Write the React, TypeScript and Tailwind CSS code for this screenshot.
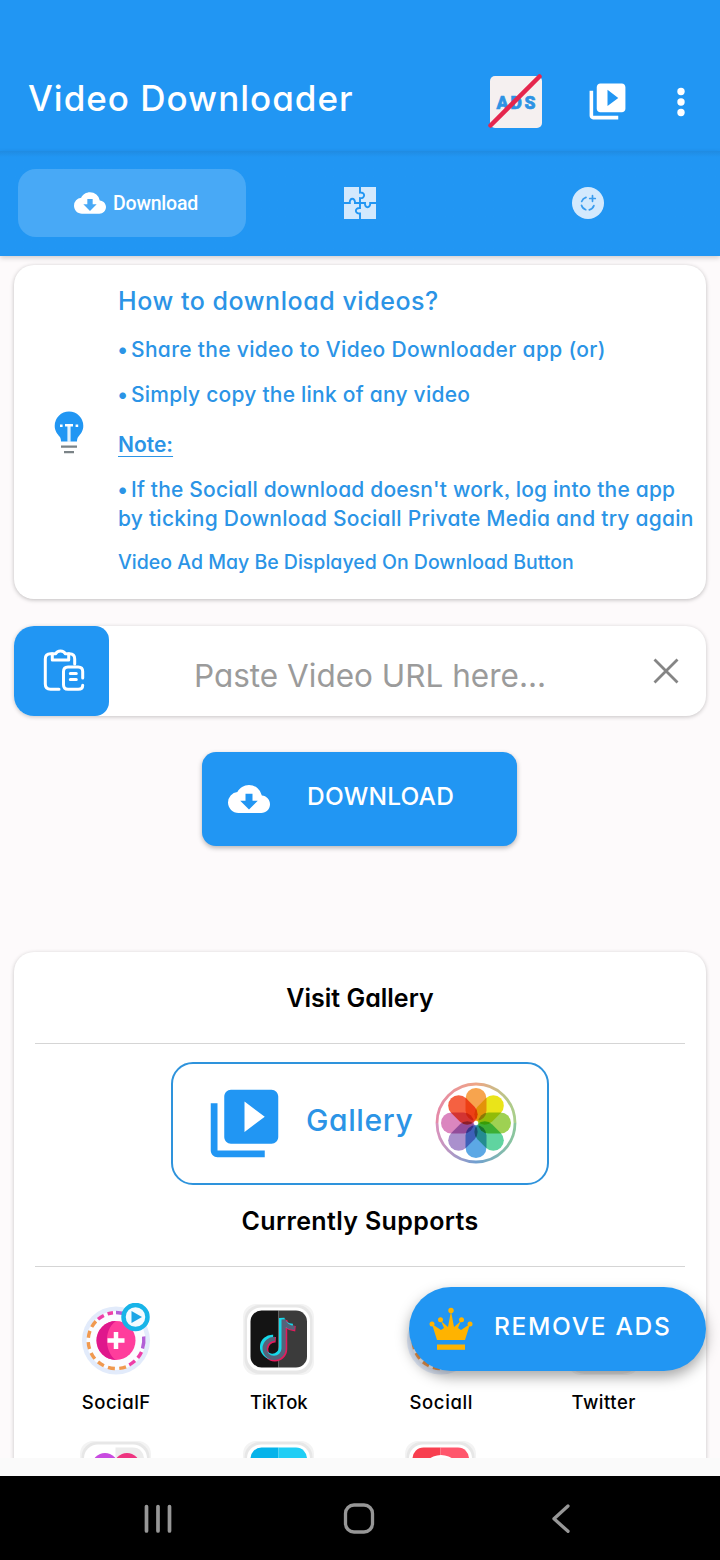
import type { ReactNode } from "react";
import { MdCloudDownload, MdVideoLibrary } from "react-icons/md";

function NoAdsIcon() {
  return (
    <svg width="56" height="56" viewBox="0 0 56 56">
      <rect x="2" y="2" width="52" height="52" rx="5" fill="#f5f0f0" />
      <text x="8.500 22.500 36.500" y="34.500" fontSize="17.500" fontWeight="900" fill="#2e93e4" stroke="#2e93e4" strokeWidth=".6" fontFamily="Roboto, sans-serif">
        ADS
      </text>
      <path d="M2.500 51.500 51.500 2.500" stroke="#e5264d" strokeWidth="4.500" strokeLinecap="round" />
    </svg>
  );
}

function PuzzleIcon() {
  return (
    <svg width="32" height="32" viewBox="0 0 32 32" fill="none">
      <path fill="#d3e9fd" d="M0 0h32v32H0z" />
      <g stroke="#2196f3" strokeWidth="1.900">
        <path d="M16 0v5.600c5.500-.5 5.500 6 0 5.500V21c-5.500-.5-5.500 6 0 5.500V32" />
        <path d="M0 16h5.800c-.6-5.600 5.600-5.600 5.200 0H21c-.6 5.600 5.600 5.600 5.200 0H32" />
      </g>
    </svg>
  );
}

function StatusIcon() {
  return (
    <svg width="32" height="32" viewBox="0 0 32 32" fill="none">
      <circle cx="16" cy="16" r="16" fill="#d3e9fd" />
      <g stroke="#3a9cee" strokeWidth="1.700" strokeLinecap="round">
        <path d="M14 10.400a6.500 6.500 0 0 0-4.300 4.100M9.500 18.300a6.500 6.500 0 0 0 4.300 4.400M17.300 22.800a6.500 6.500 0 0 0 4.600-4.200" />
        <path d="M20.500 8.700v5.600M17.700 11.500h5.600" />
      </g>
    </svg>
  );
}

function BulbIcon() {
  return (
    <svg width="30" height="44" viewBox="0 0 30 44" fill="none">
      <path d="M15 .5a14.300 14.300 0 0 0-14.300 14.300c0 5.500 2.700 8 5 11 1 1.500 1.300 2.800 1.300 4.700h16c0-1.900.3-3.200 1.300-4.700 2.300-3 5-5.500 5-11A14.300 14.300 0 0 0 15 .5z" fill="#2196f3" />
      <path d="M15 14v17" stroke="#dff0fd" strokeWidth="3.200" />
      <path d="M11 14.200h8M6 14.700h2.600M21.600 14.700h2.600" stroke="#fff" strokeWidth="2.600" />
      <path d="M7 35.700h16M10 41.200h10" stroke="#7b8387" strokeWidth="2.200" />
    </svg>
  );
}

function PasteIcon() {
  return (
    <svg width="44" height="46" viewBox="42 649 44 46" fill="none" stroke="#fff" strokeWidth="3" strokeLinecap="round" strokeLinejoin="round">
      <path d="M59 690.300h-8.500q-5.200 0-5.200-5.200v-25.200q0-5.200 5.200-5.200H52M69 654.700h.5q5.200 0 5.200 5.200V665" />
      <path d="M52.300 654.700v6.300h16.400v-6.300h-3.500a5 4.200 0 0 0-9.400 0z" />
      <path d="M82.700 679v-6.500q0-4.500-4.500-4.500H68q-4.500 0-4.500 4.500v13.300q0 4.500 4.500 4.500h10.200q4.500 0 4.500-4" />
      <path d="M70.300 674.500h6M70.300 680.500h6" />
    </svg>
  );
}

const petals = ["#f79a3a", "#e8e100", "#93cc3f", "#4fd096", "#4a9fe2", "#a184c8", "#d779b8", "#f4502c"];

function GalleryFlower() {
  return (
    <svg width="82" height="82" viewBox="-41 -41 82 82" className="isolate">
      <defs>
        <linearGradient id="ringTop" x1="0" x2="1">
          <stop offset="0" stopColor="#e58aa8" />
          <stop offset=".5" stopColor="#efa585" />
          <stop offset="1" stopColor="#a9cf8b" />
        </linearGradient>
        <linearGradient id="ringBottom" x1="0" x2="1">
          <stop offset="0" stopColor="#d893bd" />
          <stop offset=".5" stopColor="#6f9fd0" />
          <stop offset="1" stopColor="#8cc79c" />
        </linearGradient>
      </defs>
      <path d="M-39 0a39 39 0 0 1 78 0" fill="none" stroke="url(#ringTop)" strokeWidth="2.800" />
      <path d="M-39 0a39 39 0 0 0 78 0" fill="none" stroke="url(#ringBottom)" strokeWidth="2.800" />
      {petals.map((color, i) => (
        <rect key={color} x="-10.500" y="-35" width="21" height="33" rx="10.500" fill={color} opacity=".9" className="mix-blend-multiply" transform={`rotate(${i * 45})`} />
      ))}
      <circle r="2" fill="#fff" />
    </svg>
  );
}

function StoryIcon({ badge }: { badge?: boolean }) {
  return (
    <svg width="72" height="72" viewBox="0 0 72 72" fill="none">
      <circle cx="36" cy="37.500" r="34" fill="#e2ebfb" />
      <circle cx="36" cy="37.500" r="29.500" fill="#fbfcff" />
      <g strokeWidth="3.400" strokeLinecap="butt">
        <path d="M46 63.800a28 28 0 0 1-28-47.500" stroke="#f0994f" strokeDasharray="7 4.300" />
        <path d="M18 16.300A28 28 0 0 1 33 9.800" stroke="#ee3ea8" strokeDasharray="7 4" />
        <path d="M36 9.500a28 28 0 0 1 26 17.700M63.700 33.500a28 28 0 0 1-1.200 12" stroke="#b25fd6" strokeDasharray="13 5" />
        <path d="M61.500 49A28 28 0 0 1 48 62.500" stroke="#ee3ea8" strokeDasharray="7 4" />
      </g>
      <circle cx="36" cy="37.500" r="19.500" fill="#ff3d9c" />
      <path d="M36 18a19.500 19.500 0 0 0 0 39c-10-6-14-29 0-39z" fill="#df178c" />
      <path d="M36 29v17M27.500 37.500h17" stroke="#fff" strokeWidth="4.500" />
      {badge && (
        <>
          <circle cx="55.500" cy="14" r="12" fill="#f4fbff" stroke="#18b4e8" strokeWidth="4.500" />
          <path d="M51.500 8 62 14 51.500 20z" fill="#1ba5e6" />
        </>
      )}
    </svg>
  );
}

function AppTile({ left, right, children }: { left: string; right: string; children?: ReactNode }) {
  return (
    <svg width="72" height="72" viewBox="0 0 72 72">
      <rect x="0" y="1" width="71" height="71" rx="13" fill="#f3f3f3" />
      <rect x="1.500" y="2" width="68" height="69" rx="15" fill="#e7e7e7" />
      <rect x="4" y="4.500" width="63" height="63" rx="14" fill="#fff" />
      <path d="M35.500 7.500h-17A11 11 0 0 0 7.500 18.500v35A11 11 0 0 0 18.500 64.500h17z" fill={left} />
      <path d="M35.500 7.500H53a11 11 0 0 1 11 11v35a11 11 0 0 1-11 11H35.500z" fill={right} />
      {children}
    </svg>
  );
}

const NOTE = "M31.500 35.500a9.500 9.500 0 1 0 8.700 9.500V16q1 7.500 11 8.500";

function TikTokTile() {
  return (
    <AppTile left="#141414" right="#3b3b3b">
      <g fill="none">
        <path d={NOTE} stroke="#e31b5d" strokeWidth="5.500" transform="translate(1.300 1.300)" />
        <path d={NOTE} stroke="#17d9ea" strokeWidth="5.500" transform="translate(-1.500 -1)" />
        <path d={NOTE} stroke="#56637a" strokeWidth="4.200" transform="translate(.4 .5)" />
      </g>
    </AppTile>
  );
}

function HeartsTile() {
  return (
    <AppTile left="#ffffff" right="#ececec">
      <circle cx="25" cy="26" r="13" fill="#c84be0" />
      <circle cx="47" cy="26" r="13" fill="#ee3480" />
    </AppTile>
  );
}

function RingTile() {
  return (
    <AppTile left="#f83f4f" right="#ff566c">
      <circle cx="36" cy="35" r="20" fill="#fff" />
    </AppTile>
  );
}

function CrownIcon() {
  return (
    <svg width="44" height="44" viewBox="0 0 44 44" fill="#ffb300">
      <path d="M8 33 3 17l9 6 3-2-3-7 7 6 3-16 3 16 7-6-3 7 3 2 9-6-5 16z" />
      <circle cx="3" cy="17" r="2.500" />
      <circle cx="11.500" cy="12.800" r="2.500" />
      <circle cx="22" cy="3.500" r="2.700" />
      <circle cx="32.500" cy="12.800" r="2.500" />
      <circle cx="41" cy="17" r="2.500" />
      <path d="M8 37.500h28v5.300H8z" />
    </svg>
  );
}

function Bullet() {
  return <span className="inline-block w-[13px] tracking-normal [font-feature-settings:normal]"><span className="-ml-px">•</span></span>;
}

function SupportedApp({ name, tracking, children }: { name: string; tracking: string; children: ReactNode }) {
  return (
    <div className="flex h-[137px] flex-col items-center">
      {children}
      <div className={`mt-[13px] text-[18.500px] font-medium leading-7 text-black ${tracking}`}>{name}</div>
    </div>
  );
}

export default function App() {
  return (
    <div className="relative flex h-[1560px] w-[720px] flex-col overflow-hidden bg-[#fafafa] font-['Inter',sans-serif] [font-feature-settings:'cv11','ss03']">
      <header className="flex h-[151px] shrink-0 items-start bg-[#2196f3] pl-7 pt-[73px]">
        <h1 className="w-[460px] whitespace-nowrap text-[35px] font-medium leading-[50px] tracking-[1px] text-white">Video Downloader</h1>
        <div className="mt-px">
          <NoAdsIcon />
        </div>
        <MdVideoLibrary size={43} color="#fff" className="ml-[42px] mt-[7px]" />
        <svg width="10" height="32" viewBox="0 0 10 32" fill="#fff" className="ml-[47px] mt-[13px]">
          <circle cx="5" cy="5.500" r="3.700" />
          <circle cx="5" cy="16" r="3.700" />
          <circle cx="5" cy="26.500" r="3.700" />
        </svg>
      </header>

      <nav className="z-10 flex h-[105px] shrink-0 items-center bg-[#2196f3] bg-linear-to-b from-[#208be1] to-[#2196f3] to-[6px] px-[18px] pb-0.5 shadow-[0_2px_5px_rgba(0,0,0,0.18)]">
        <div className="flex h-[68px] w-[228px] items-center rounded-[18px] bg-[#48a9f6] pl-14">
          <MdCloudDownload size={32} color="#fff" />
          <span className="ml-[7px] mt-0.5 font-['Roboto',sans-serif] text-[19.500px] font-medium leading-6 tracking-[-0.200px] text-white">Download</span>
        </div>
        <div className="flex flex-1 justify-center">
          <PuzzleIcon />
        </div>
        <div className="flex flex-1 justify-center">
          <StatusIcon />
        </div>
      </nav>

      <main className="h-[1202px] shrink-0 overflow-hidden bg-[#fdfafb] px-3.5 pt-[9px]">
        <section className="flex h-[334px] rounded-[20px] bg-white text-[#2b94e6] shadow-[0_1px_4px_rgba(0,0,0,0.25)]">
          <div className="w-[104px] shrink-0 pl-10 pt-[146px]">
            <BulbIcon />
          </div>
          <div className="whitespace-nowrap pt-[21px] text-[21px] font-medium leading-[29px]">
            <h2 className="text-[25px] leading-[30px] tracking-[0.550px]">How to download videos?</h2>
            <p className="mt-[19px] tracking-[0.320px]"><Bullet />Share the video to Video Downloader app (or)</p>
            <p className="mt-4 tracking-[0.230px]"><Bullet />Simply copy the link of any video</p>
            <p className="mt-[21px] font-semibold tracking-[0px] underline decoration-1 underline-offset-4">Note:</p>
            <p className="mt-4 tracking-[0.190px]"><Bullet />If the Sociall download doesn't work, log into the app</p>
            <p className="tracking-[0.240px]">by ticking Download Sociall Private Media and try again</p>
            <p className="mt-[15px] text-[19.500px] tracking-[0px]">Video Ad May Be Displayed On Download Button</p>
          </div>
        </section>

        <section className="mt-[27px] flex h-[90px] items-center rounded-[20px] bg-white shadow-[0_1px_4px_rgba(0,0,0,0.22)]">
          <div className="flex h-[90px] w-[95px] items-center justify-center rounded-[20px] rounded-r-[14px] bg-[#2196f3] pl-1">
            <PasteIcon />
          </div>
          <div className="w-[520px] whitespace-nowrap pl-[85px] pt-[9px] text-[31.500px] leading-10 tracking-[0px] text-[#9b9b9b]">Paste Video URL here...</div>
          <svg width="26" height="26" viewBox="0 0 26 26" stroke="#858585" strokeWidth="2.800" className="ml-[24px]">
            <path d="M1.500 1.500 24.500 24.500M24.500 1.500 1.500 24.500" />
          </svg>
        </section>

        <div className="mt-9 flex justify-center">
          <button className="mr-px flex h-[94px] w-[315px] items-center rounded-[14px] bg-[#2196f3] pl-[26px] shadow-[0_2px_5px_rgba(0,0,0,0.28)]">
            <MdCloudDownload size={42} color="#fff" />
            <span className="mb-[7px] ml-[37px] text-[24.500px] font-medium leading-8 tracking-[0.200px] text-white">DOWNLOAD</span>
          </button>
        </div>

        <section className="mt-[106px] h-[560px] rounded-[20px] bg-white px-[21px] pt-7 text-center shadow-[0_1px_4px_rgba(0,0,0,0.22)]">
          <h2 className="text-[25px] font-semibold leading-9 tracking-[0px] text-black">Visit Gallery</h2>
          <div className="mt-[27px] h-px bg-[#d5d5d5]" />
          <div className="mx-auto mt-[18px] flex h-[123px] w-[378px] items-center rounded-[22px] border-2 border-[#2e93dc] pl-[31px]">
            <MdVideoLibrary size={81} color="#2196f3" />
            <span className="mb-[7px] ml-[21px] w-[108px] whitespace-nowrap text-left text-[30px] font-medium leading-10 tracking-[0.600px] text-[#2b94e6]">Gallery</span>
            <span className="mb-0.5 ml-[20.500px]">
              <GalleryFlower />
            </span>
          </div>
          <h2 className="mt-[18px] text-[25px] font-semibold leading-9 tracking-[0.350px] text-black">Currently Supports</h2>
          <div className="mt-[27px] h-px bg-[#d5d5d5]" />
          <div className="mt-9 grid grid-cols-4">
            <SupportedApp name="SocialF" tracking="tracking-[0.500px]">
              <StoryIcon badge />
            </SupportedApp>
            <SupportedApp name="TikTok" tracking="tracking-[-0.100px]">
              <TikTokTile />
            </SupportedApp>
            <SupportedApp name="Sociall" tracking="tracking-[0.600px]">
              <StoryIcon />
            </SupportedApp>
            <SupportedApp name="Twitter" tracking="tracking-[0.500px]">
              <AppTile left="#35b6f0" right="#55c8f5" />
            </SupportedApp>
            <div className="flex justify-center">
              <HeartsTile />
            </div>
            <div className="flex justify-center">
              <AppTile left="#05b3ea" right="#20cef5" />
            </div>
            <div className="flex justify-center">
              <RingTile />
            </div>
          </div>
        </section>
      </main>

      <button className="absolute left-[409px] top-[1287px] z-20 flex h-[84px] w-[297px] items-center rounded-full bg-[#2196f3] pl-5 shadow-[0_6px_14px_rgba(0,0,0,0.35)]">
        <CrownIcon />
        <span className="mb-[7px] ml-[21px] whitespace-nowrap text-[24.500px] font-medium leading-8 tracking-[1.700px] text-white">REMOVE ADS</span>
      </button>

      <footer className="mt-[18px] flex h-[84px] shrink-0 items-center bg-black pt-0.5">
        <svg width="720" height="40" viewBox="0 0 720 40" fill="none" stroke="#979797" strokeLinecap="round">
          <path d="M146.500 7.500v24.500M158 7.500v24.500M169.500 7.500v24.500" strokeWidth="3.700" />
          <rect x="345.500" y="6" width="27" height="27" rx="8.500" strokeWidth="3.300" />
          <path d="M568 7 554 19.800l14 12.500" strokeWidth="3.300" strokeLinejoin="round" />
        </svg>
      </footer>
    </div>
  );
}
